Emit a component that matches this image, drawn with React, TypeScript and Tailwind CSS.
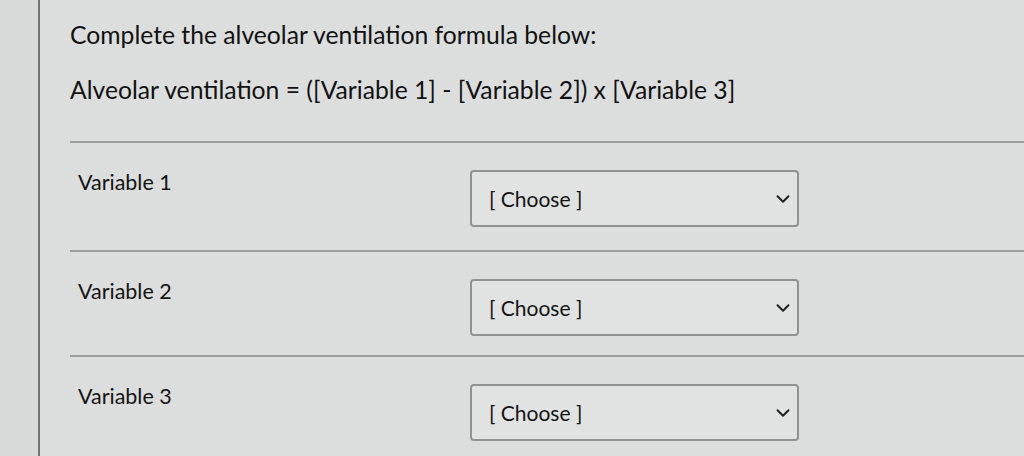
import { ChevronDown } from "lucide-react";

const rows = [
  { label: "Variable 1", h: "h-[109px]" },
  { label: "Variable 2", h: "h-[105px]" },
  { label: "Variable 3", h: "h-[105px]" },
];

const ChooseBox = () => (
  <div className="flex h-[57px] w-[329px] items-center justify-between rounded-[4px] border-2 border-[#8f9292] bg-[#e1e3e2] pl-[17px] pr-[3px]">
    <span className="text-[21px] text-[#141414]">[ Choose ]</span>
    <ChevronDown className="h-[22px] w-[22px] text-[#222]" strokeWidth={2.2} />
  </div>
);

export default function App() {
  return (
    <div
      className="flex h-[456px] w-full overflow-hidden bg-[#dcdedd]"
      style={{ fontFamily: "Lato, 'Open Sans', sans-serif" }}
    >
      {/* left gutter */}
      <div className="w-[40px] shrink-0 border-r-2 border-[#6f7372] bg-[#d8dad9]" />

      <div className="flex flex-1 flex-col pl-[30px]">
        <h1 className="mt-[17px] text-[24.7px] leading-[36px] text-[#111]">
          Complete the alveolar ventilation formula below:
        </h1>
        <p className="mt-[19px] text-[24.7px] leading-[36px] text-[#111]">
          Alveolar ventilation = ([Variable 1] - [Variable 2]) x [Variable 3]
        </p>

        <div className="mt-[33px]">
          {rows.map((r) => (
            <div key={r.label} className={`${r.h} border-t-2 border-[#9a9d9d] flex`}>
              <div className="w-[400px] pl-[8px] pt-[25px] text-[21.5px] leading-[28px] text-[#141414]">
                {r.label}
              </div>
              <div className="pt-[27px]">
                <ChooseBox />
              </div>
            </div>
          ))}
        </div>
      </div>
    </div>
  );
}
